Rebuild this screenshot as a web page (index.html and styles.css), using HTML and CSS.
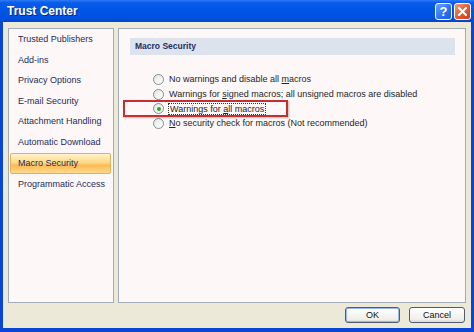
FILE: index.html
```html
<!DOCTYPE html>
<html lang="en">

<head>
    <meta charset="UTF-8">
    <meta name="viewport" content="width=device-width, initial-scale=1.0">
    <title>Trust Center</title>
    <link rel="stylesheet" href="styles.css">
</head>

<body>
    <div class="window">
        <header class="titlebar">
            <h1>Trust Center</h1>
            <div class="caption-buttons">
                <button class="cap-btn help" type="button">?</button>
                <button class="cap-btn close" type="button">
                    <svg width="9" height="9" viewBox="0 0 9 9">
                        <path d="M1 1 L8 8 M8 1 L1 8" stroke="#fff" stroke-width="2" stroke-linecap="square" />
                    </svg>
                </button>
            </div>
        </header>

        <div class="frame">
            <div class="panels">
                <nav class="sidebar">
                    <div class="nav-item">Trusted Publishers</div>
                    <div class="nav-item">Add-ins</div>
                    <div class="nav-item">Privacy Options</div>
                    <div class="nav-item">E-mail Security</div>
                    <div class="nav-item">Attachment Handling</div>
                    <div class="nav-item">Automatic Download</div>
                    <div class="nav-item active">Macro Security</div>
                    <div class="nav-item">Programmatic Access</div>
                </nav>

                <section class="content">
                    <h2>Macro Security</h2>
                    <div class="options">
                        <label class="option">
                            <span class="radio"></span>
                            <span>No warnings and disable all <u>m</u>acros</span>
                        </label>
                        <label class="option">
                            <span class="radio"></span>
                            <span>Warnings for <u>s</u>igned macros; all unsigned macros are disabled</span>
                        </label>
                        <label class="option marked">
                            <span class="radio checked"></span>
                            <span class="focus">Warnings for <u>a</u>ll macros</span>
                        </label>
                        <label class="option">
                            <span class="radio"></span>
                            <span><u>N</u>o security check for macros (Not recommended)</span>
                        </label>
                    </div>
                </section>
            </div>

            <footer class="buttons">
                <button class="btn default" type="button">OK</button>
                <button class="btn" type="button">Cancel</button>
            </footer>
        </div>
    </div>
</body>

</html>
```

FILE: styles.css
```css
body {
    margin: 0;
    padding: 0;
    font-family: 'Liberation Sans', Arial, sans-serif;
}

.window {
    width: 474px;
    height: 332px;
    display: flex;
    flex-direction: column;
    background: #0a46d6;
}

/* title bar */
.titlebar {
    height: 22px;
    display: flex;
    align-items: center;
    justify-content: space-between;
    padding: 0 3px 0 7px;
    background: linear-gradient(#2e7cf8 0%, #0a5ce9 12%, #0055e5 50%, #0050df 85%, #0143c6 100%);
}

.titlebar h1 {
    margin: 0;
    color: white;
    font-size: 12px;
    font-weight: bold;
    text-shadow: 1px 1px 0 #0a2a8a;
}

.caption-buttons {
    display: flex;
    gap: 2px;
}

.cap-btn {
    width: 17px;
    height: 17px;
    padding: 0;
    border: 1px solid #fff;
    border-radius: 3px;
    display: flex;
    align-items: center;
    justify-content: center;
    color: white;
    font-family: 'Liberation Sans', Arial, sans-serif;
    font-weight: bold;
    font-size: 13px;
}

.cap-btn.help {
    background: linear-gradient(135deg, #6fa3ff, #2a6ef0 60%, #1f5de0);
}

.cap-btn.close {
    background: linear-gradient(135deg, #f59a7a, #e05a2c 55%, #c8401a);
}

/* dialog body */
.frame {
    flex: 1;
    margin: 0 3px 4px 3px;
    padding: 6px 5px 5px 5px;
    background: #ece9d8;
    display: flex;
    flex-direction: column;
}

.panels {
    height: 275px;
    display: flex;
    gap: 4px;
}

.sidebar,
.content {
    background: #fdf7f7;
    border: 1px solid #a3adba;
}

.sidebar {
    width: 104px;
    font-size: 9px;
    color: #1d2c57;
}

.nav-item {
    height: 20.6px;
    line-height: 20.6px;
    padding-left: 9px;
    white-space: nowrap;
}

.nav-item.active {
    margin: 0 2px 0 1px;
    padding-left: 7px;
    height: 19px;
    line-height: 19px;
    border: 1px solid #e5b056;
    border-radius: 2px;
    background: linear-gradient(#fff3cf 0%, #ffd985 45%, #fdbb55 60%, #ffd98e 100%);
}

.content {
    flex: 1;
    padding: 9px 10px 0 11px;
    font-size: 9px;
    color: #262626;
}

.content h2 {
    margin: 0;
    height: 17px;
    line-height: 17px;
    padding-left: 5px;
    background: #dde3ec;
    font-size: 8.5px;
    font-weight: bold;
    color: #1c3064;
}

.options {
    margin-top: 17px;
    padding-left: 23px;
}

.option {
    height: 14.7px;
    display: flex;
    align-items: center;
    gap: 5px;
    white-space: nowrap;
}

.radio {
    width: 9px;
    height: 9px;
    border: 1px solid #7f8d9c;
    border-radius: 50%;
    background: linear-gradient(135deg, #e6e6e0, #ffffff);
    display: flex;
    align-items: center;
    justify-content: center;
}

.radio.checked::after {
    content: '';
    width: 4px;
    height: 4px;
    border-radius: 50%;
    background: #2aa72a;
}

.option.marked {
    position: relative;
}

.option.marked::before {
    content: '';
    position: absolute;
    left: -30px;
    top: -1px;
    width: 161px;
    height: 13px;
    border: 2px solid #c32f33;
    box-shadow: 1px 1px 2px rgba(0, 0, 0, 0.25);
}

.focus {
    outline: 1px dotted #333;
    outline-offset: 0;
    padding: 0 1px;
}

/* bottom buttons */
.buttons {
    display: flex;
    justify-content: flex-end;
    gap: 9px;
    margin-top: 4px;
    padding-right: 1px;
}

.btn {
    width: 56px;
    height: 16px;
    padding: 0;
    border: 1px solid #4d5d74;
    border-radius: 3px;
    background: linear-gradient(#ffffff, #f0efea 80%, #dcdbd3);
    font-family: 'Liberation Sans', Arial, sans-serif;
    font-size: 9px;
    color: #111;
}

.btn.default {
    width: 55px;
    box-shadow: inset 0 0 0 1px #98b7ec;
}
```
